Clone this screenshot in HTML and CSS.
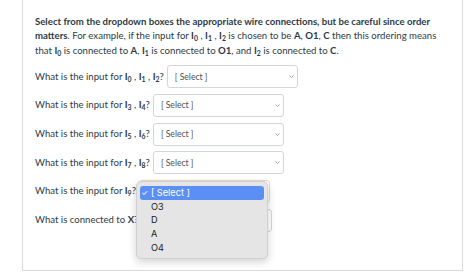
FILE: index.html
```html
<!DOCTYPE html>
<html lang="en">
<head>
    <meta charset="UTF-8">
    <link rel="stylesheet" href="styles.css">
    <title>Quiz Frage</title>
</head>
<body>

    <div class="card">
        <p class="intro">
            <b>Select from the dropdown boxes the appropriate wire connections, but be careful since order matters</b>. For example, if the input for <b>I<sub>0</sub></b> , <b>I<sub>1</sub></b> , <b>I<sub>2</sub></b> is chosen to be <b>A</b>, <b>O1</b>, <b>C</b> then this ordering means that <b>I<sub>0</sub></b> is connected to <b>A</b>, <b>I<sub>1</sub></b> is connected to <b>O1</b>, and <b>I<sub>2</sub></b> is connected to <b>C</b>.
        </p>

        <div class="row">
            <span>What is the input for <b>I<sub>0</sub></b> , <b>I<sub>1</sub></b> , <b>I<sub>2</sub></b>?</span>
            <div class="select"><span>[ Select ]</span><svg width="5" height="3" viewBox="0 0 5 3"><path d="M0.5 0.5 L2.5 2.5 L4.5 0.5" fill="none" stroke="#8a8f94" stroke-width="0.8"/></svg></div>
        </div>
        <div class="row">
            <span>What is the input for <b>I<sub>3</sub></b> , <b>I<sub>4</sub></b>?</span>
            <div class="select"><span>[ Select ]</span><svg width="5" height="3" viewBox="0 0 5 3"><path d="M0.5 0.5 L2.5 2.5 L4.5 0.5" fill="none" stroke="#8a8f94" stroke-width="0.8"/></svg></div>
        </div>
        <div class="row">
            <span>What is the input for <b>I<sub>5</sub></b> , <b>I<sub>6</sub></b>?</span>
            <div class="select"><span>[ Select ]</span><svg width="5" height="3" viewBox="0 0 5 3"><path d="M0.5 0.5 L2.5 2.5 L4.5 0.5" fill="none" stroke="#8a8f94" stroke-width="0.8"/></svg></div>
        </div>
        <div class="row">
            <span>What is the input for <b>I<sub>7</sub></b> , <b>I<sub>8</sub></b>?</span>
            <div class="select"><span>[ Select ]</span><svg width="5" height="3" viewBox="0 0 5 3"><path d="M0.5 0.5 L2.5 2.5 L4.5 0.5" fill="none" stroke="#8a8f94" stroke-width="0.8"/></svg></div>
        </div>
        <div class="row">
            <span>What is the input for <b>I<sub>9</sub></b>?</span>
            <div class="select open"><span>[ Select ]</span><svg width="5" height="3" viewBox="0 0 5 3"><path d="M0.5 0.5 L2.5 2.5 L4.5 0.5" fill="none" stroke="#8a8f94" stroke-width="0.8"/></svg>
                <!-- offenes Dropdown -->
                <div class="menu">
                    <div class="item active"><span class="check">✓</span>[ Select ]</div>
                    <div class="item"><span class="check"></span>O3</div>
                    <div class="item"><span class="check"></span>D</div>
                    <div class="item"><span class="check"></span>A</div>
                    <div class="item"><span class="check"></span>O4</div>
                </div>
            </div>
        </div>
        <div class="row">
            <span>What is connected to <b>X</b>?</span>
            <div class="select"><span>[ Select ]</span><svg width="5" height="3" viewBox="0 0 5 3"><path d="M0.5 0.5 L2.5 2.5 L4.5 0.5" fill="none" stroke="#8a8f94" stroke-width="0.8"/></svg></div>
        </div>
    </div>

</body>
</html>
```

FILE: styles.css
```css
body {
    margin: 0;
    background-color: #fff;
    font-family: Lato, "Liberation Sans", sans-serif;
    color: #2d3b45;
}

/* Rahmen um die Frage */
.card {
    box-sizing: border-box;
    width: 441px;
    margin-left: 22px;
    border: 1px solid #d9d9d9;
    border-top: none;
    padding: 15px 13px 33px 12px;
    font-size: 9.6px;
    line-height: 14.4px;
}

.intro {
    margin: 0 0 7px 0;
}

b {
    font-weight: 700;
}

sub {
    font-size: 0.72em;
    line-height: 0;
    vertical-align: -0.3em;
}

.row {
    display: flex;
    align-items: center;
    gap: 3px;
    height: 23px;
    margin-bottom: 5.7px;
}

.select {
    position: relative;
    box-sizing: border-box;
    width: 131px;
    height: 23px;
    display: flex;
    justify-content: space-between;
    align-items: center;
    padding: 0 3px 0 7px;
    border: 1px solid #d3d7da;
    border-radius: 3px;
    background-color: #fff;
    font-size: 8.6px;
    color: #4a5259;
}

.select.open {
    border-color: #e3dcc6;
}

/* Menü liegt über den anderen Zeilen */
.menu {
    position: absolute;
    left: -4px;
    top: 0.5px;
    z-index: 2;
    box-sizing: border-box;
    width: 132px;
    padding: 3.5px 3px 3px 3px;
    background-color: #e5e5e6;
    border: 1px solid #d0d0d2;
    border-radius: 5px;
    box-shadow: 0 3px 8px rgba(0, 0, 0, 0.18);
    font-family: Inter, "Noto Sans", sans-serif;
    font-size: 9.2px;
    color: #222;
}

.item {
    display: flex;
    align-items: center;
    height: 13.7px;
    border-radius: 3px;
}

.item.active {
    height: 14px;
    background-color: #5c8ff4;
    color: #fff;
}

.check {
    width: 10px;
    padding-left: 1px;
    font-size: 8px;
}
```
